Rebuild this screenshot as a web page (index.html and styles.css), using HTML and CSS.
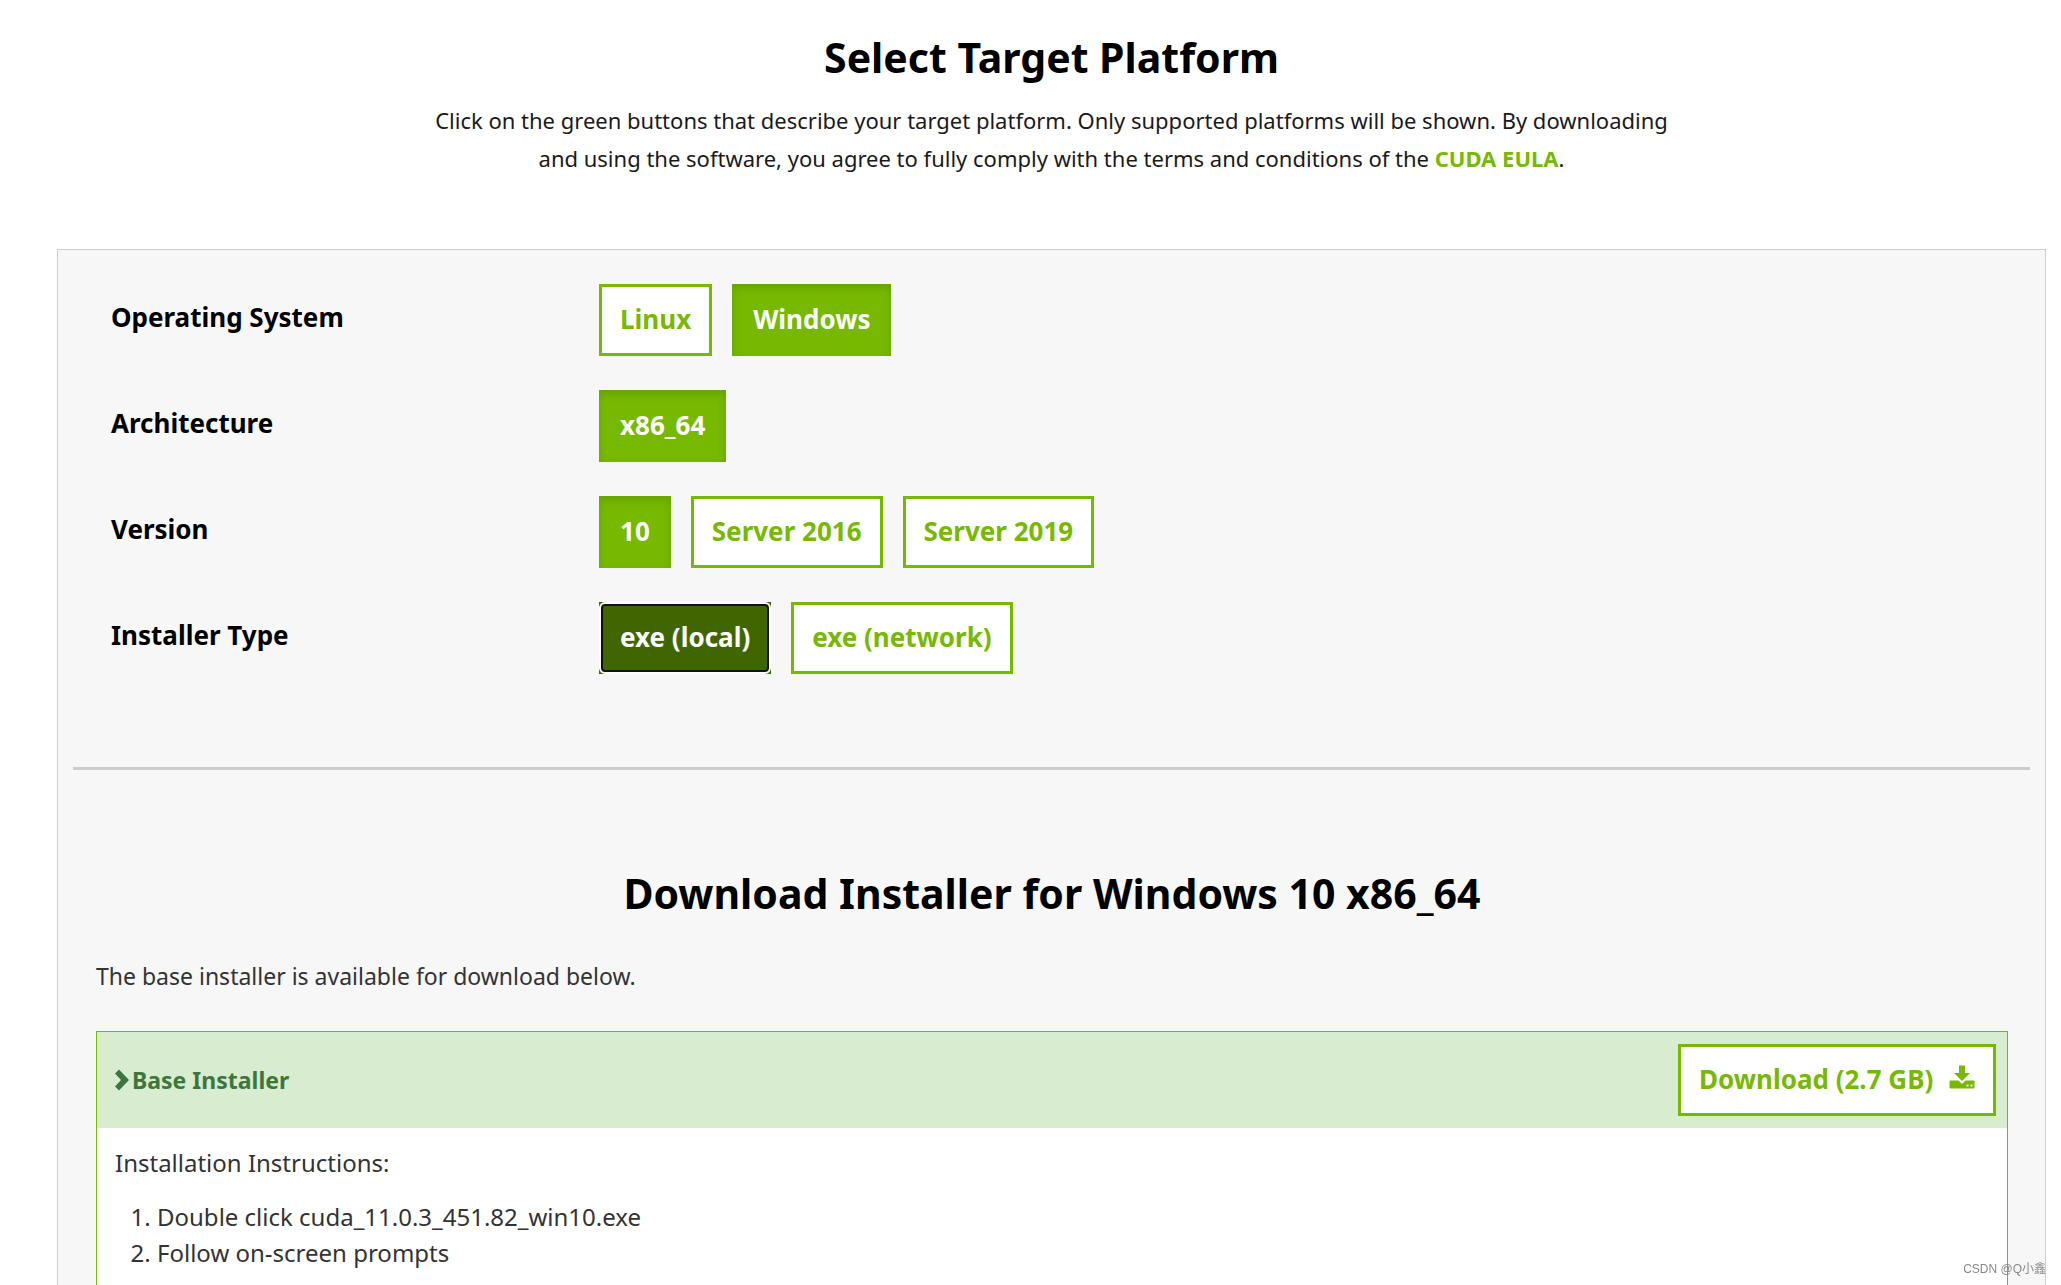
FILE: index.html
```
<!DOCTYPE html>
<html lang="en">
<head>
    <meta charset="UTF-8">
    <meta name="viewport" content="width=device-width, initial-scale=1.0">
    <title>CUDA Toolkit Download</title>
    <link rel="stylesheet" href="styles.css">
</head>
<body>
    <header class="intro">
        <h1>Select Target Platform</h1>
        <p>Click on the green buttons that describe your target platform. Only supported platforms will be shown. By downloading and using the software, you agree to fully comply with the terms and conditions of the <a href="#eula">CUDA EULA</a>.</p>
    </header>

    <main class="selector">
        <div class="options">
            <div class="option-row" role="group" aria-labelledby="os">
                <span class="option-label" id="os">Operating System</span>
                <button class="button">Linux</button>
                <button class="button active">Windows</button>
            </div>
            <div class="option-row" role="group" aria-labelledby="arch">
                <span class="option-label" id="arch">Architecture</span>
                <button class="button active">x86_64</button>
            </div>
            <div class="option-row" role="group" aria-labelledby="version">
                <span class="option-label" id="version">Version</span>
                <button class="button active">10</button>
                <button class="button">Server 2016</button>
                <button class="button">Server 2019</button>
            </div>
            <div class="option-row" role="group" aria-labelledby="type">
                <span class="option-label" id="type">Installer Type</span>
                <button class="button active focused">exe (local)</button>
                <button class="button">exe (network)</button>
            </div>
        </div>

        <hr>

        <section class="download">
            <h2>Download Installer for Windows 10 x86_64</h2>
            <p>The base installer is available for download below.</p>
            <div class="installer">
                <div class="installer-header">
                    <a class="installer-toggle" href="#base">
                        <svg class="chevron" viewBox="0 0 14 22" aria-hidden="true"><path d="M0 4.500 4 0.500 14 11 4 21.500 0 17.500 6 11Z"/></svg>
                        <span>Base Installer</span>
                    </a>
                    <a class="button" href="#download">Download (2.7 GB)
                        <svg class="download-icon" viewBox="0 0 26 24" aria-hidden="true"><path d="M10 0.500h6V8h5l-8 8-8-8h5z"/><path fill-rule="evenodd" d="M1.500 15.500H9.500l3.500 3.500 3.500-3.500h8q1 0 1 1v6q0 1-1 1H1.500q-1 0-1-1v-6q0-1 1-1zM17.500 19.500v2h2v-2zM21.500 19.500v2h2v-2z"/></svg>
                    </a>
                </div>
                <div class="installer-body" id="base">
                    <p>Installation Instructions:</p>
                    <ol>
                        <li>Double click cuda_11.0.3_451.82_win10.exe</li>
                        <li>Follow on-screen prompts</li>
                    </ol>
                </div>
            </div>
        </section>
    </main>

    <div class="watermark">CSDN @Q小鑫</div>
</body>
</html>
```
FILE: styles.css
```
* { box-sizing: border-box; }
html { scrollbar-width: none; }
body { font-family: "Noto Sans", sans-serif; font-size: 23px; line-height: 36px; color: #333; background-color: #fff; margin: 0; padding: 29px 15px 0 57px; }
h1, h2 { font-size: 41px; line-height: 56px; font-weight: bold; color: #000; text-align: center; margin: 0; }
p { margin: 0; }
a { color: #76b900; text-decoration: none; }

.intro { text-align: center; margin-bottom: 72px; }
.intro p { max-width: 1260px; margin: 16px auto 0; font-size: 22px; line-height: 38px; color: #1a1a1a; }
.intro a { font-weight: bold; }

.selector { background-color: #f7f7f7; border: 1px solid #ccc; padding: 34px 15px 40px; }
.options { display: flex; flex-direction: column; gap: 34px; padding: 0 38px; }
.option-row { display: flex; align-items: center; gap: 20px; }
.option-label { width: 26%; margin-right: -21px; padding-bottom: 6px; font-size: 26px; font-weight: bold; color: #000; }

.button {
    position: relative;
    padding: 15px 18px 17px;
    border: 3px solid #76b900;
    background-color: #fff;
    color: #76b900;
    font-family: inherit;
    font-size: 26px;
    line-height: 34px;
    font-weight: bold;
    cursor: pointer;
}
.button.active {
    padding: 18px 21px 20px;
    border: none;
    background-color: #76b900;
    color: #fff;
    box-shadow: inset 0 4px 8px rgba(0,0,0,0.13);
}
.button.focused { background-color: #3f6600; box-shadow: none; }
/* focus ring */
.button.focused::after {
    content: "";
    position: absolute;
    inset: 0;
    border: 2px solid #fff;
    border-radius: 6px;
    box-shadow: inset 0 0 0 2px #111;
}

hr { height: 3px; border: none; background-color: #ccc; margin: 93px 0 95px; }

.download { padding: 0 22px 0 23px; }
.download h2 { margin-bottom: 37px; }

.installer { margin-top: 37px; background-color: #fff; border: 1px solid #76b900; }
.installer-header { display: flex; align-items: center; justify-content: space-between; padding: 12px 11px 12px 18px; background-color: #d8ecd0; }
.installer-toggle { display: flex; align-items: center; gap: 3px; color: #3c763d; font-weight: bold; }
.chevron { width: 14px; height: 22px; fill: #3c763d; }
.download-icon { width: 26px; height: 24px; margin-left: 9px; fill: #76b900; }
.installer-body { padding: 17px 18px; }
.installer-body p { font-size: 24px; }
.installer-body ol { margin: 18px 0 0; padding-left: 42px; font-size: 24px; }

.watermark { position: fixed; right: 15px; bottom: 6px; font-family: "Liberation Sans", "Noto Sans CJK SC", sans-serif; font-size: 12px; line-height: 20px; color: #888; }
```
